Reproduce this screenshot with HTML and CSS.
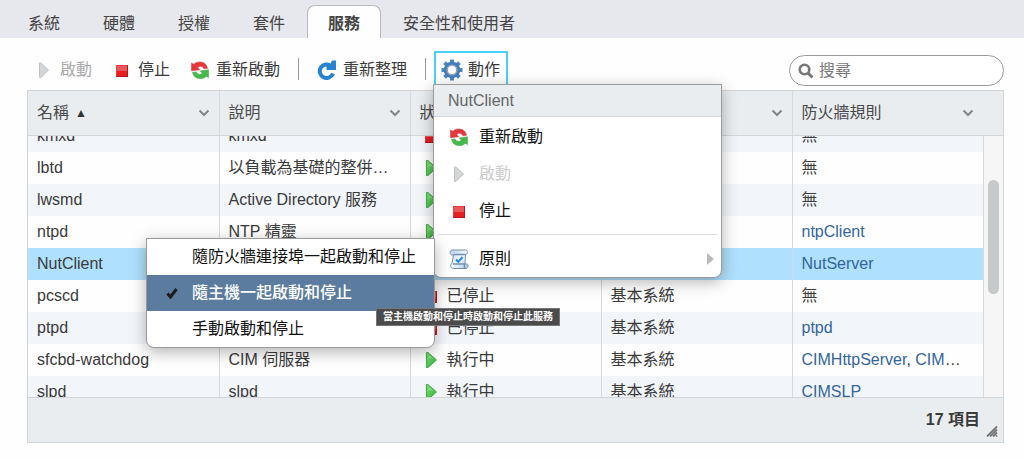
FILE: index.html
```
<!DOCTYPE html>
<html lang="zh-Hant">
<head>
  <meta charset="UTF-8">
  <meta name="viewport" content="width=device-width, initial-scale=1">
  <title>服務</title>
  <link rel="stylesheet" href="styles.css">
</head>
<body>

  <!-- Shared icons -->
  <svg class="icon-defs" aria-hidden="true">
    <defs>
      <linearGradient id="green" x1="0" y1="0" x2="1" y2="1">
        <stop offset="0" stop-color="#7fdc78"/>
        <stop offset="1" stop-color="#2fae34"/>
      </linearGradient>
      <linearGradient id="paper" x1="0" y1="0" x2="1" y2="1">
        <stop offset="0" stop-color="#b4cde3"/>
        <stop offset=".5" stop-color="#f4f9fd"/>
        <stop offset="1" stop-color="#a9c6de"/>
      </linearGradient>
    </defs>
    <symbol id="icon-play" viewBox="0 0 20 20">
      <path d="M5.500 2.500h1.500L15.500 10 7 17.500H5.500z" fill="url(#green)" stroke="#3fae42" stroke-linejoin="round"/>
      <path d="M7 8.500L9 6.500l2 2" fill="none" stroke="#c2f3bd" opacity=".7"/>
    </symbol>
    <symbol id="icon-play-off" viewBox="0 0 20 20">
      <path d="M5.500 3h1.500l7.500 7-7.500 7.500H5.500z" fill="#d3d6d6" stroke="#bfc2c2" stroke-linejoin="round"/>
    </symbol>
    <symbol id="icon-stop" viewBox="0 0 20 20">
      <rect x="4" y="5" width="12" height="12" fill="#e81e22"/>
      <rect x="4" y="5" width="12" height="6" fill="#e8575b"/>
      <path d="M4.500 16.500V5.500h11" fill="none" stroke="#e8393d"/>
      <path d="M4 16.500h11.500V5" fill="none" stroke="#b5171b"/>
    </symbol>
    <symbol id="icon-restart" viewBox="0 0 20 20">
      <path d="M1.500 3l2.300 1.200C5.800 2.400 8 1.800 10.500 2c3.800.3 6.300 2.600 7 6.300l-3.600.4c-1.300-2.400-3.900-3.200-6.200-1.300l2.100 2.300-8.300 1.100z" fill="#e5373b" stroke="#d0474a" stroke-width=".6"/>
      <path d="M18.500 17.600l-2.300-1.200c-2 1.800-4.200 2.400-6.700 2.200-3.800-.3-6.300-2.600-7-6.300l3.600-.4c1.300 2.400 3.900 3.200 6.200 1.300l-2.100-2.300 8.300-1.100z" fill="#45b94a" stroke="#5aa85d" stroke-width=".6"/>
    </symbol>
    <symbol id="icon-refresh" viewBox="0 0 20 20">
      <path d="M16 13.500A6.800 6.800 0 1 1 14 6" fill="none" stroke="#2684cf" stroke-width="4"/>
      <path d="M15 .5h4v9.500H9.500V6h3z" fill="#2684cf"/>
    </symbol>
    <symbol id="icon-gear" viewBox="0 0 22 22">
      <g stroke="#4c86c0" stroke-width="4">
        <path d="M11 .5v21M.5 11h21M3.600 3.600l14.800 14.800M18.400 3.600L3.600 18.400"/>
      </g>
      <circle cx="11" cy="11" r="6.500" fill="#fff" stroke="#3f7fbd" stroke-width="3.500"/>
      <circle cx="11" cy="11" r="4.800" fill="#fff" stroke="#9aa4ad" stroke-width="1.500"/>
    </symbol>
    <symbol id="icon-policy" viewBox="0 0 20 20">
      <path d="M3 1h13.500c2.500 0 2.500 4.500 0 4.500L16 15h2c1.800 0 1.500 4.500-1 4.500H4.500C1 19.500 1 15 3 14.500L4.500 6H3C.5 6 .5 1 3 1z" fill="url(#paper)" stroke="#7591a9"/>
      <path d="M4.500 5.500h12M4 15h11.500v4" fill="none" stroke="#6f93b1" stroke-width="1.500"/>
      <path d="M7 10.500l2.300 2.300L13.500 8" fill="none" stroke="#1e86dc" stroke-width="2"/>
    </symbol>
    <symbol id="icon-chevron" viewBox="0 0 12 8">
      <path d="M1.500 1.500L6 6l4.500-4.500" fill="none" stroke="#858585" stroke-width="2"/>
    </symbol>
  </svg>

  <!-- Tabs -->
  <nav class="tabs">
    <a class="tab" href="#system">系統</a>
    <a class="tab" href="#hardware">硬體</a>
    <a class="tab" href="#licensing">授權</a>
    <a class="tab" href="#packages">套件</a>
    <a class="tab active" href="#services">服務</a>
    <a class="tab" href="#security">安全性和使用者</a>
  </nav>

  <!-- Toolbar -->
  <div class="toolbar">
    <button class="tool" disabled><svg class="icon"><use href="#icon-play-off"/></svg>啟動</button>
    <button class="tool"><svg class="icon"><use href="#icon-stop"/></svg>停止</button>
    <button class="tool"><svg class="icon"><use href="#icon-restart"/></svg>重新啟動</button>
    <span class="separator"></span>
    <button class="tool"><svg class="icon"><use href="#icon-refresh"/></svg>重新整理</button>
    <span class="separator"></span>

    <div class="dropdown">
      <button class="tool open" aria-haspopup="true" aria-expanded="true"><svg class="icon icon-large"><use href="#icon-gear"/></svg>動作</button>

      <div class="menu action-menu">
        <div class="menu-title">NutClient</div>
        <ul class="menu-list">
          <li><button class="menu-item"><svg class="icon"><use href="#icon-restart"/></svg>重新啟動</button></li>
          <li><button class="menu-item" disabled><svg class="icon"><use href="#icon-play-off"/></svg>啟動</button></li>
          <li><button class="menu-item"><svg class="icon"><use href="#icon-stop"/></svg>停止</button></li>
          <li class="menu-divider"></li>
          <li class="has-submenu">
            <button class="menu-item" aria-haspopup="true" aria-expanded="true"><svg class="icon"><use href="#icon-policy"/></svg>原則<span class="submenu-arrow"></span></button>
            <ul class="menu submenu">
              <li><button class="policy">隨防火牆連接埠一起啟動和停止</button></li>
              <li class="policy-current">
                <button class="policy selected">
                  <svg class="check" viewBox="0 0 12 12"><path d="M1.500 6.500l3 3.500L10.500 2" fill="none" stroke="#1b1b1b" stroke-width="3"/></svg>
                  隨主機一起啟動和停止
                </button>
                <span class="tooltip" role="tooltip">當主機啟動和停止時啟動和停止此服務</span>
              </li>
              <li><button class="policy">手動啟動和停止</button></li>
            </ul>
          </li>
        </ul>
      </div>
    </div>

    <label class="search">
      <svg class="search-icon" viewBox="0 0 16 16"><circle cx="6.500" cy="6.500" r="4.800" fill="none" stroke="#777" stroke-width="2.600"/><path d="M10 10l4.500 4.500" stroke="#777" stroke-width="3"/></svg>
      <input type="search" placeholder="搜尋" aria-label="搜尋">
    </label>
  </div>

  <!-- Services grid -->
  <div class="grid">
    <div class="grid-header">
      <table>
        <thead>
          <tr>
            <th><div class="head">名稱 <span class="sort">▲</span><svg class="chevron"><use href="#icon-chevron"/></svg></div></th>
            <th><div class="head">說明<svg class="chevron"><use href="#icon-chevron"/></svg></div></th>
            <th><div class="head">狀態<svg class="chevron"><use href="#icon-chevron"/></svg></div></th>
            <th><div class="head">來源<svg class="chevron"><use href="#icon-chevron"/></svg></div></th>
            <th><div class="head">防火牆規則<svg class="chevron"><use href="#icon-chevron"/></svg></div></th>
          </tr>
        </thead>
      </table>
    </div>

    <div class="grid-body">
      <div class="grid-rows">
        <table>
          <tbody>
            <tr><td>kmxd</td><td>kmxd</td><td><svg class="icon state"><use href="#icon-stop"/></svg>已停止</td><td>基本系統</td><td>無</td></tr>
            <tr><td>lbtd</td><td>以負載為基礎的整併精靈</td><td><svg class="icon state"><use href="#icon-play"/></svg>執行中</td><td>基本系統</td><td>無</td></tr>
            <tr><td>lwsmd</td><td>Active Directory 服務</td><td><svg class="icon state"><use href="#icon-play"/></svg>執行中</td><td>基本系統</td><td>無</td></tr>
            <tr><td>ntpd</td><td>NTP 精靈</td><td><svg class="icon state"><use href="#icon-play"/></svg>執行中</td><td>基本系統</td><td><a href="#ntpClient">ntpClient</a></td></tr>
            <tr class="selected"><td>NutClient</td><td>NutClient</td><td><svg class="icon state"><use href="#icon-play"/></svg>執行中</td><td>基本系統</td><td><a href="#NutServer">NutServer</a></td></tr>
            <tr><td>pcscd</td><td>PC/SC</td><td><svg class="icon state"><use href="#icon-stop"/></svg>已停止</td><td>基本系統</td><td>無</td></tr>
            <tr><td>ptpd</td><td>PTP 精靈</td><td><svg class="icon state"><use href="#icon-stop"/></svg>已停止</td><td>基本系統</td><td><a href="#ptpd">ptpd</a></td></tr>
            <tr><td>sfcbd-watchdog</td><td>CIM 伺服器</td><td><svg class="icon state"><use href="#icon-play"/></svg>執行中</td><td>基本系統</td><td><a href="#CIMHttpServer">CIMHttpServer</a>, <a href="#CIMHttpsServer">CIMHttpsServer</a></td></tr>
            <tr><td>slpd</td><td>slpd</td><td><svg class="icon state"><use href="#icon-play"/></svg>執行中</td><td>基本系統</td><td><a href="#CIMSLP">CIMSLP</a></td></tr>
          </tbody>
        </table>
      </div>
      <div class="scrollbar"><div class="thumb"></div></div>
    </div>

    <div class="grid-footer">
      <span>17 項目</span>
      <svg class="grip" viewBox="0 0 12 12"><path d="M1 11.500L11 1.500M4 11.500l7-7M7 11.500l4-4M10 11.500l1-1" stroke="#777" stroke-width="1.800"/></svg>
    </div>
  </div>

</body>
</html>
```
FILE: styles.css
```
* { box-sizing: border-box; }

body {
  margin: 0;
  height: 100vh;
  min-height: 400px;
  display: flex;
  flex-direction: column;
  background: #fefefe;
  color: #3a3a3a;
  font-family: 'Liberation Sans', 'Noto Sans CJK TC', sans-serif;
  font-size: 16px;
  line-height: 24px;
}

button, input {
  font: inherit;
  color: inherit;
}

button {
  border: none;
  background: transparent;
  cursor: pointer;
}

a {
  color: #32659a;
  text-decoration: none;
}

.icon-defs {
  position: absolute;
  width: 0;
  height: 0;
}

.icon {
  width: 20px;
  height: 20px;
  flex: none;
}

/* Tabs */
.tabs {
  display: flex;
  align-items: flex-end;
  gap: 1px;
  height: 38px;
  padding-left: 7px;
  background: #e7e8ed;
}

.tab {
  height: 33px;
  padding: 6px 20px 0;
  border: 1px solid transparent;
  border-bottom: none;
  border-radius: 8px 8px 0 0;
  color: #444;
}

.tab.active {
  background: #fefefe;
  border-color: #b9bbbf;
  font-weight: bold;
}

/* Toolbar */
.toolbar {
  display: flex;
  align-items: flex-start;
  height: 52px;
  padding: 13px 20px 3px 24px;
}

.tool {
  display: flex;
  align-items: center;
  gap: 6px;
  height: 37px;
  padding: 1px 10px 0;
  white-space: nowrap;
}

.tool:disabled {
  color: #aaa;
}

.tool.open {
  padding: 1px 6px 0;
  border: 2px solid #4bd0f5;
  background: #fff;
}

.icon-large {
  width: 22px;
  height: 22px;
  margin: 0 -1px;
}

.separator {
  width: 1px;
  height: 22px;
  margin: 7px 8px;
  background: #999;
}

.search {
  display: flex;
  align-items: center;
  gap: 5px;
  width: 215px;
  height: 31px;
  margin: 4px 0 0 auto;
  padding: 0 8px;
  border: 1px solid #999;
  border-radius: 16px;
  background: #fff;
}

.search-icon {
  width: 16px;
  height: 16px;
  flex: none;
}

.search input {
  flex: 1;
  min-width: 0;
  padding: 0;
  border: none;
  outline: none;
  background: transparent;
}

.search input::placeholder {
  color: #777;
}

/* Menus */
.dropdown {
  position: relative;
  z-index: 10;
}

.menu {
  position: absolute;
  margin: 0;
  padding: 0;
  list-style: none;
  background: #fff;
  border: 1px solid #9a9a9a;
  border-radius: 0 0 8px 8px;
  box-shadow: 0 4px 16px rgba(0, 0, 0, 0.3);
  color: #111;
  white-space: nowrap;
}

.action-menu {
  top: 33px;
  left: -1px;
  width: 289px;
}

.menu-title {
  height: 32px;
  padding: 4px 14px;
  border-bottom: 1px solid #d0d6da;
  background: #e9edf0;
  color: #666;
}

.menu-list {
  margin: 0;
  padding: 1px 0 0;
  list-style: none;
}

.menu-item {
  display: flex;
  align-items: center;
  gap: 10px;
  width: 100%;
  height: 37px;
  padding: 0 7px 0 15px;
}

.menu-item:disabled {
  color: #ccc;
}

.menu-divider {
  height: 1px;
  margin: 5px 4px;
  background: #ddd;
}

.has-submenu {
  position: relative;
}

.submenu-arrow {
  margin-left: auto;
  border: 6px solid transparent;
  border-left: 7px solid #bbb;
  border-right: none;
}

.submenu {
  top: -2px;
  right: 100%;
  width: 289px;
  margin-right: -1px;
}

.policy {
  display: flex;
  align-items: center;
  width: 100%;
  height: 36px;
  padding: 0 0 0 45px;
}

.policy.selected {
  gap: 14px;
  padding-left: 19px;
  background: #5b7c9e;
  color: #fff;
  font-weight: 500;
}

.check {
  width: 12px;
  height: 12px;
  flex: none;
}

.policy-current {
  position: relative;
}

.tooltip {
  position: absolute;
  z-index: 1;
  top: 33px;
  left: 229px;
  height: 18px;
  padding: 0 6px;
  border: 1px solid #777;
  background: #4b4b4b;
  color: #fff;
  font-size: 10px;
  font-weight: bold;
  line-height: 16px;
}

/* Services grid */
.grid {
  flex: 1;
  min-height: 0;
  display: flex;
  flex-direction: column;
  margin: 0 20px 15px 27px;
  border: 1px solid #d3d6d8;
}

.grid table {
  width: 100%;
  table-layout: fixed;
  border-collapse: collapse;
}

.grid-header {
  padding-right: 20px;
  border-bottom: 1px solid #d3d6d8;
  background: #e9edf0;
}

th {
  height: 44px;
  padding: 0 9px;
  font-weight: normal;
  text-align: left;
  color: #4a4a4a;
}

.head {
  display: flex;
  align-items: center;
  gap: 6px;
}

.sort {
  font-size: 12px;
  color: #333;
}

.chevron {
  width: 12px;
  height: 8px;
  margin-left: auto;
}

.grid-body {
  flex: 1;
  min-height: 0;
  display: flex;
}

.grid-rows {
  flex: 1;
  min-width: 0;
  overflow: hidden;
}

.grid-rows table {
  margin-top: -16px;
}

td {
  height: 32px;
  padding: 0 12px 0 9px;
  overflow: hidden;
  white-space: nowrap;
  text-overflow: ellipsis;
  background: #fefefe;
}

th + th,
td + td {
  border-left: 1px solid #d8dadc;
}

tr:nth-child(odd) td {
  background: #f2f5fa;
}

tr.selected td {
  background: #afe0fd;
}

.state {
  margin: 0 6px 0 1px;
  vertical-align: -5px;
}

.scrollbar {
  width: 20px;
  padding: 44px 4px 0;
  border-left: 1px solid #d8dadc;
  background: #f5f6f5;
}

.thumb {
  width: 11px;
  height: 114px;
  border-radius: 6px;
  background: #c6c9ca;
}

.grid-footer {
  display: flex;
  justify-content: flex-end;
  align-items: center;
  gap: 6px;
  height: 45px;
  padding-right: 5px;
  border-top: 1px solid #d3d6d8;
  background: #e9edf0;
  font-weight: bold;
}

.grip {
  width: 12px;
  height: 12px;
  margin-top: 22px;
}
```
